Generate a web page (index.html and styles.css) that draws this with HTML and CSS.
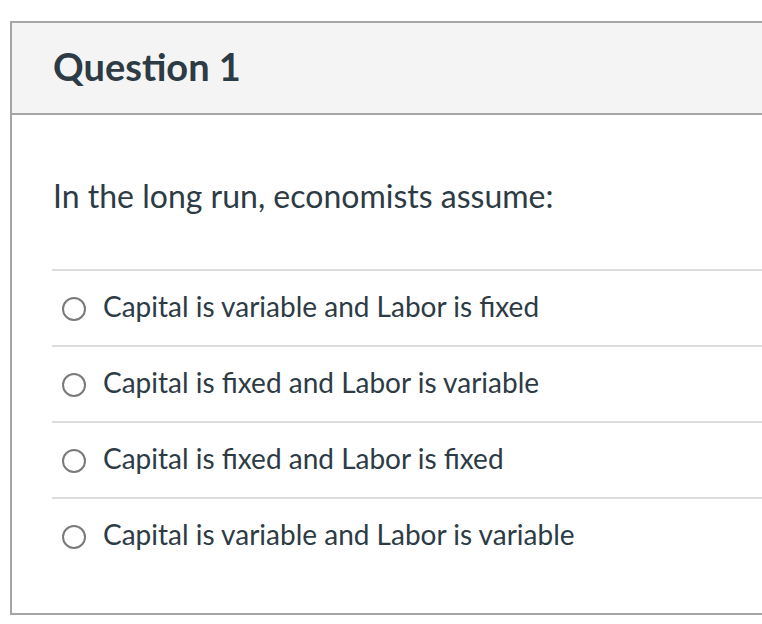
FILE: index.html
```html
<!DOCTYPE html>
<html lang="en">
<head>
<meta charset="utf-8">
<title>Question 1</title>
<link rel="stylesheet" href="styles.css">
</head>
<body>
<div class="quiz">
  <div class="quiz-header">
    <h2 class="quiz-title">Question 1</h2>
  </div>
  <div class="quiz-body">
    <p class="quiz-text">In the long run, economists assume:</p>
    <ul class="answers">
      <li class="answer"><span class="radio"></span><span class="label">Capital is variable and Labor is fixed</span></li>
      <li class="answer"><span class="radio"></span><span class="label">Capital is fixed and Labor is variable</span></li>
      <li class="answer"><span class="radio"></span><span class="label">Capital is fixed and Labor is fixed</span></li>
      <li class="answer"><span class="radio"></span><span class="label">Capital is variable and Labor is variable</span></li>
    </ul>
  </div>
</div>
</body>
</html>
```
FILE: styles.css
```css
html, body {
  margin: 0;
  padding: 0;
  background: #ffffff;
}
body {
  font-family: Lato, "Open Sans", sans-serif;
  color: #2d3b45;
}
.quiz {
  margin: 21px 0 0 10px;
  border: 2px solid #a5a5a5;
  border-right: none;
}
.quiz-header {
  box-sizing: border-box;
  height: 92px;
  background: #f4f4f4;
  border-bottom: 2px solid #a5a5a5;
  display: flex;
  align-items: center;
  padding: 0 0 3px 41px;
}
.quiz-title {
  margin: 0;
  font-size: 38px;
  font-weight: 700;
  line-height: 1.2;
}
.quiz-body {
  padding: 62px 0 40px 40px;
}
.quiz-text {
  margin: 0 0 54px 1px;
  font-size: 32px;
  line-height: 38px;
}
.answers {
  list-style: none;
  margin: 0;
  padding: 0;
}
.answer {
  display: flex;
  align-items: center;
  gap: 17px;
  height: 74px;
  padding-left: 10px;
  border-top: 2px solid #dddddd;
}
.radio {
  width: 20px;
  height: 20px;
  border: 2px solid #7a7a7a;
  border-radius: 50%;
  flex: none;
  margin-top: 2px;
}
.label {
  font-size: 28px;
  line-height: 34px;
  margin-bottom: 4px;
}
```
